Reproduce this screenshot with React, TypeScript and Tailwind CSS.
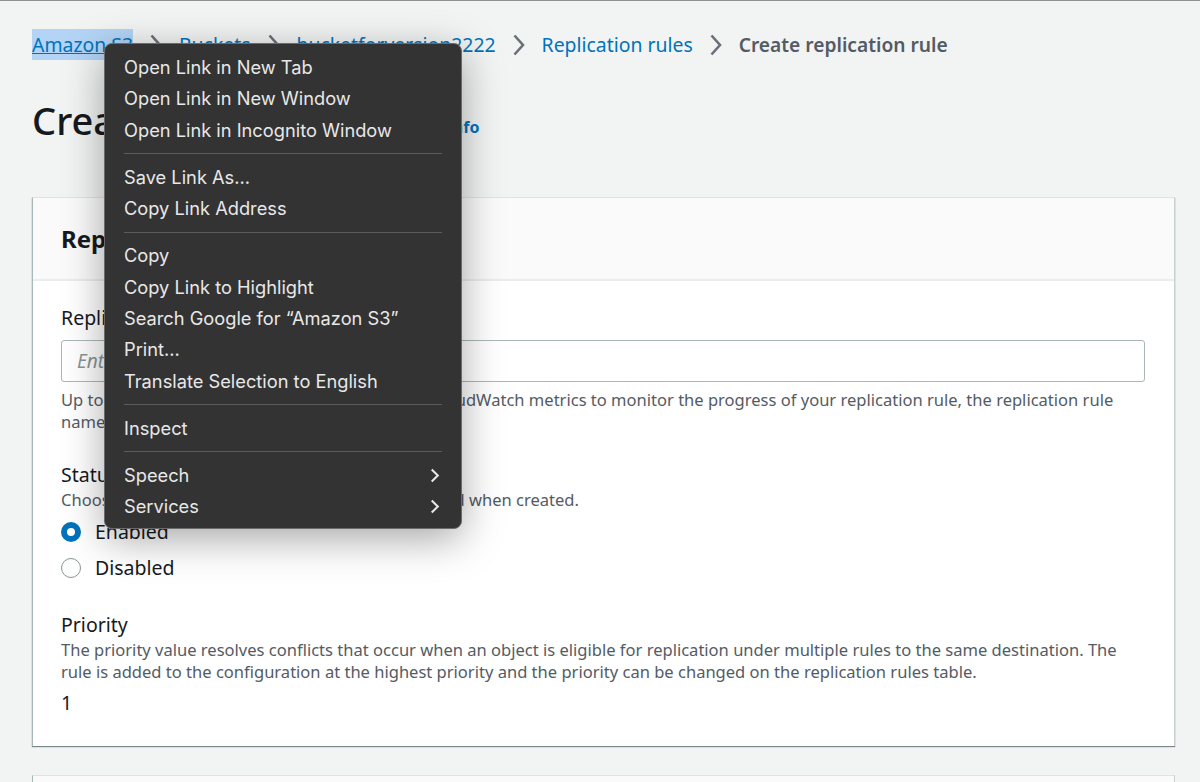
import React from "react";

const page = { fontFamily: '"Noto Sans", "Open Sans", sans-serif' };
const menuFont = { fontFamily: 'Inter, Roboto, sans-serif' };

function Chevron() {
  return (
    <svg viewBox="0 0 12 22" className="mx-[17px] h-[22px] w-[12px]" fill="none" stroke="#687078" strokeWidth="2.6">
      <path d="M1.5 1.5 L10 11 L1.5 20.5" />
    </svg>
  );
}

function Item({ label, arrow }: { label: string; arrow?: boolean }) {
  return (
    <div className="flex h-[31.4px] items-center justify-between text-[18.25px] text-[#e8e8e8]">
      <span>{label}</span>
      {arrow && (
        <svg viewBox="0 0 10 16" className="mr-[2px] h-[15px] w-[10px]" fill="none" stroke="#e8e8e8" strokeWidth="2.2">
          <path d="M1.5 1.5 L8 8 L1.5 14.5" />
        </svg>
      )}
    </div>
  );
}

function Sep() {
  return <div className="my-[7.3px] h-px bg-[#5c5c5c]" />;
}

export default function App() {
  return (
    <div className="relative h-[782px] w-[1200px] overflow-hidden bg-[#f2f3f3]" style={page}>
      <div className="h-px bg-[#8f8f94]" />
      <nav className="flex h-[88px] items-center pl-8 pb-[1px] text-[19.4px] text-[#0073bb]">
        <a className="inline-flex h-[31px] items-center bg-[#b3d4f5] underline">Amazon S3</a>
        <Chevron />
        <a>Buckets</a>
        <Chevron />
        <a>bucketforversion2222</a>
        <Chevron />
        <a>Replication rules</a>
        <Chevron />
        <span className="mt-[1px] text-[19.2px] font-semibold text-[#545b64]">Create replication rule</span>
      </nav>
      <div className="flex h-[64px] items-center pl-8 pb-[3px]">
        <h1 className="text-[38px] leading-none font-medium text-[#16191f]">Create replication rule</h1>
        <a className="ml-[10px] mt-[15px] text-[16px] font-bold text-[#0073bb]">Info</a>
      </div>
      <section className="mt-11 mb-[29px] ml-8 h-[549px] w-[1143px] border-x border-t border-[#dfe3e4] border-r-[#c8d0d2] border-l-[#aab7b8] bg-white shadow-[0_1px_1px_0_rgba(0,28,36,0.5)]">
        <div className="flex h-[83px] items-center border-b-2 border-[#eaeded] bg-[#fafafa] pl-[28px]">
          <h2 className="text-[24px] font-bold text-[#16191f]">Replication rule configuration</h2>
        </div>
        <div className="pr-[29px] pl-[28px] pt-[24px]">
          <div className="text-[19.5px] leading-[26px] text-[#16191f]">Replication rule name</div>
          <div className="mt-[9px] flex h-[42px] items-center rounded-[3px] border border-[#aab7b8] bg-white pl-[15px] text-[19px] italic text-[#879596]">
            Enter rule name
          </div>
          <p className="mt-[7px] text-[16.55px] leading-[22px] text-[#545b64]">
            Up to 255 characters. In order to be able to use CloudWatch metrics to monitor the progress of your replication rule, the replication rule name must only contain letters, numbers.
          </p>
          <div className="mt-[29px] text-[19.5px] leading-[26px] text-[#16191f]">Status</div>
          <p className="mt-[1px] text-[16.55px] leading-[22px] text-[#545b64]">Choose whether the rule will be enabled or disabled when created.</p>
          <div className="mt-[3px] flex h-[36px] items-center gap-[14px] text-[19.5px] text-[#16191f]">
            <span className="flex h-5 w-5 items-center justify-center rounded-full bg-[#0073bb]"><span className="h-2 w-2 rounded-full bg-white" /></span>
            Enabled
          </div>
          <div className="flex h-[36px] items-center gap-[14px] text-[19.5px] text-[#16191f]">
            <span className="h-5 w-5 rounded-full border border-[#879596] bg-white" />
            Disabled
          </div>
          <div className="mt-[26px] text-[19.5px] leading-[26px] text-[#16191f]">Priority</div>
          <p className="mt-[1px] text-[16.55px] leading-[21.5px] text-[#545b64]">
            The priority value resolves conflicts that occur when an object is eligible for replication under multiple rules to the same destination. The rule is added to the configuration at the highest priority and the priority can be changed on the replication rules table.
          </p>
          <div className="mt-[8px] text-[19.5px] leading-[26px] text-[#16191f]">1</div>
        </div>
      </section>
      <section className="ml-8 h-[60px] w-[1143px] border-x border-t border-[#dfe3e4] border-r-[#c8d0d2] border-l-[#aab7b8] bg-[#fafafa]" />

      <div
        className="absolute left-[104px] top-[43px] w-[358px] rounded-[8px] border border-[#6b6b6b] bg-[#333333] px-[19px] pt-[8px] pb-[6px] shadow-[0_10px_40px_rgba(0,0,0,0.35)]"
        style={menuFont}
      >
        <Item label="Open Link in New Tab" />
        <Item label="Open Link in New Window" />
        <Item label="Open Link in Incognito Window" />
        <Sep />
        <Item label="Save Link As..." />
        <Item label="Copy Link Address" />
        <Sep />
        <Item label="Copy" />
        <Item label="Copy Link to Highlight" />
        <Item label="Search Google for “Amazon S3”" />
        <Item label="Print..." />
        <Item label="Translate Selection to English" />
        <Sep />
        <Item label="Inspect" />
        <Sep />
        <Item label="Speech" arrow />
        <Item label="Services" arrow />
      </div>
    </div>
  );
}
